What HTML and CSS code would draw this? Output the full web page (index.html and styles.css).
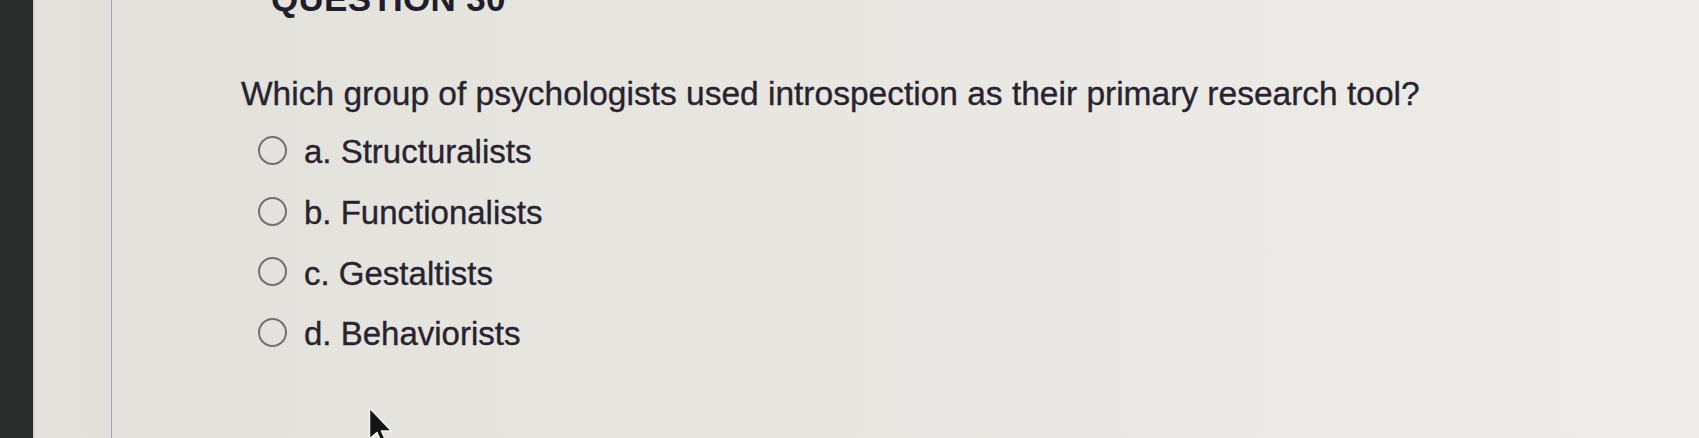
FILE: index.html
```html
<!DOCTYPE html>
<html>
<head>
<meta charset="utf-8">
<link rel="stylesheet" href="styles.css">
</head>
<body>
<div class="screen">
  <div class="bezel"></div>
  <div class="sidebar"></div>
  <main class="content">
    <h2 class="qhead">QUESTION 30</h2>
    <p class="question">Which group of psychologists used introspection as their primary research tool?</p>
    <ul class="options">
      <li class="option"><span class="radio"></span><span class="label">a. Structuralists</span></li>
      <li class="option"><span class="radio"></span><span class="label">b. Functionalists</span></li>
      <li class="option"><span class="radio"></span><span class="label">c. Gestaltists</span></li>
      <li class="option"><span class="radio"></span><span class="label">d. Behaviorists</span></li>
    </ul>
  </main>
  <svg class="cursor" width="32" height="42" viewBox="0 0 32 42">
    <path d="M1.5 1 L1.5 32 L9 25.5 L13.5 36 L18 34 L13.5 24 L23.5 24 Z" fill="#141414" stroke="#f2f2f2" stroke-width="1.5" stroke-linejoin="round"/>
  </svg>
</div>
</body>
</html>
```

FILE: styles.css
```css
html, body {
  margin: 0;
  padding: 0;
  width: 1699px;
  height: 438px;
  overflow: hidden;
}

.screen {
  position: relative;
  display: flex;
  width: 1699px;
  height: 438px;
  background: linear-gradient(90deg, #e1e0db 0%, #e6e5e0 35%, #eae9e5 70%, #edece8 100%);
  font-family: "Liberation Sans", Arial, sans-serif;
  color: #28232f;
  overflow: hidden;
}

.bezel {
  width: 33px;
  flex: none;
  background: #2a2c2c;
  border-right: 2px solid #d8cfcb;
}

.sidebar {
  width: 76px;
  flex: none;
  border-right: 1px solid #a6a6aa;
  background: linear-gradient(90deg, #e3e2dd, #e1e0db);
}

.content {
  flex: 1;
  padding-left: 129px;
}

.qhead {
  margin: -21px 0 0 30px;
  height: 40px;
  font-size: 35px;
  line-height: 40px;
  font-weight: bold;
  color: #221d2b;
  letter-spacing: 0.3px;
}

.question {
  margin: 55px 0 0 0;
  font-size: 33.5px;
  line-height: 40px;
  white-space: nowrap;
  -webkit-text-stroke: 0.35px #28232f;
}

.options {
  list-style: none;
  margin: 8px 0 0 17px;
  padding: 0;
}

.option {
  display: flex;
  align-items: center;
  height: 60.7px;
  font-size: 33px;
  line-height: 40px;
  -webkit-text-stroke: 0.35px #28232f;
}

.radio {
  flex: none;
  width: 25px;
  height: 25px;
  border: 2.5px solid #727075;
  border-radius: 50%;
  margin-bottom: 4px;
  margin-right: 17px;
  box-sizing: content-box;
}

.label {
  white-space: nowrap;
}

.cursor {
  position: absolute;
  left: 368px;
  top: 407px;
}
```
